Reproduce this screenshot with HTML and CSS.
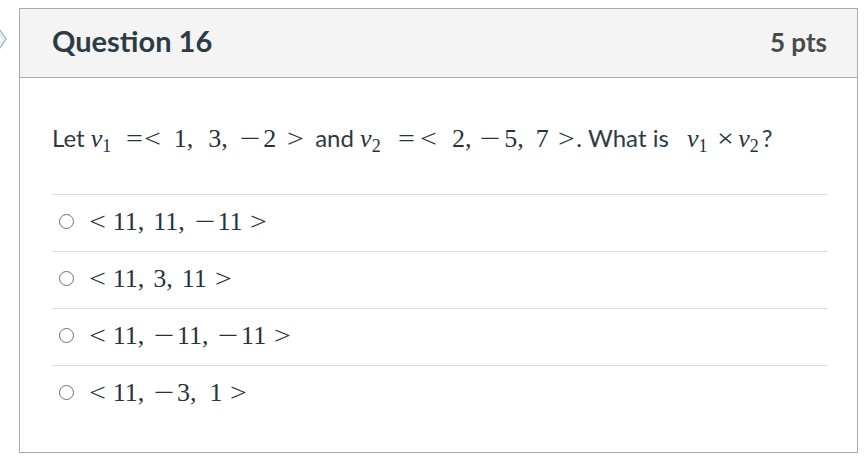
FILE: index.html
```html
<!DOCTYPE html>
<html>
<head>
<meta charset="utf-8">
<link rel="stylesheet" href="styles.css">
</head>
<body>
<div class="page">
  <svg class="flag" width="10" height="24" viewBox="0 0 10 24">
    <polyline points="-1,1 6,11 -1,21" fill="none" stroke="#a9bccb" stroke-width="1.6"/>
    <polyline points="-1,5 3,11 -1,17" fill="none" stroke="#c9d6e0" stroke-width="1"/>
  </svg>
  <div class="question">
    <div class="header">
      <h2 class="title">Question 16</h2>
      <div class="pts">5 pts</div>
    </div>
    <div class="content">
      <p class="prompt">Let <span class="m"><i>v</i><sub>1</sub><span class="eq"><span class="sym">=</span><span class="sym lt">&lt;</span></span>1,<span class="g"></span>3,<span class="g"></span><span class="neg">−</span>2<span class="sym gt">&gt;</span></span> and <span class="m"><i>v</i><sub>2</sub><span class="eq wide"><span class="sym">=</span><span class="sym lt">&lt;</span></span>2,<span class="g2"></span><span class="neg">−</span>5,<span class="g2"></span>7<span class="sym gt end">&gt;</span></span>.<span class="sp"></span>What is <span class="m far"><i>v</i><sub>1</sub><span class="sym x">×</span><i>v</i><sub>2</sub></span>?</p>
      <div class="answers">
        <label class="answer"><span class="radio"></span><span class="m"><span class="sym alt">&lt;</span>11,<span class="ga"></span>11,<span class="ga"></span><span class="neg">−</span>11<span class="sym agt">&gt;</span></span></label>
        <label class="answer"><span class="radio"></span><span class="m"><span class="sym alt">&lt;</span>11,<span class="ga"></span>3,<span class="ga"></span>11<span class="sym agt">&gt;</span></span></label>
        <label class="answer"><span class="radio"></span><span class="m"><span class="sym alt">&lt;</span>11,<span class="ga"></span><span class="neg">−</span>11,<span class="ga"></span><span class="neg">−</span>11<span class="sym agt">&gt;</span></span></label>
        <label class="answer"><span class="radio"></span><span class="m"><span class="sym alt">&lt;</span>11,<span class="ga"></span><span class="neg">−</span>3,<span class="ga wide"></span>1<span class="sym agt">&gt;</span></span></label>
      </div>
    </div>
  </div>
</div>
</body>
</html>
```
FILE: styles.css
```css
html, body {
  margin: 0;
  padding: 0;
  background: #fff;
}
body {
  font-family: Lato, "Liberation Sans", sans-serif;
  color: #2d3b45;
}
.page {
  position: relative;
  padding: 8px 0 0 19px;
}
.flag {
  position: absolute;
  left: 0;
  top: 28px;
}
.question {
  box-sizing: border-box;
  width: 839px;
  height: 445px;
  border: 1px solid #aaaaaa;
}
.header {
  box-sizing: border-box;
  height: 69px;
  background: #f4f4f4;
  border-bottom: 1px solid #aaaaaa;
  display: flex;
  align-items: baseline;
  justify-content: space-between;
  padding: 14px 30px 0 32px;
}
.title {
  margin: 0;
  font-size: 29px;
  line-height: normal;
  font-weight: 700;
  color: #2d3b45;
}
.pts {
  font-size: 26px;
  font-weight: 700;
  color: #4a4a4a;
}
.content {
  padding: 0 30px 0 32px;
}
.prompt {
  margin: 0;
  padding: 45px 0 40px;
  font-size: 24px;
  line-height: 30px;
  white-space: nowrap;
}
.m {
  font-family: "Liberation Serif", "DejaVu Serif", serif;
  font-size: 26px;
  color: #26333d;
}
.m i {
  font-style: italic;
}
.m sub {
  font-size: 18px;
  vertical-align: -5px;
  line-height: 0;
}
.m.far {
  margin: 0 3px 0 12px;
}
.sym {
  display: inline-block;
  transform: scaleX(1.15);
}
.neg {
  display: inline-block;
  transform: scaleX(1.4);
  margin-right: 6px;
}
.eq {
  margin: 0 14px 0 16px;
}
.eq .lt {
  margin-left: 3px;
}
.eq.wide {
  margin: 0 16px 0 18px;
}
.eq.wide .lt {
  margin-left: 8px;
}
.gt {
  margin: 0 6px 0 12px;
}
.gt.end {
  margin: 0 3px 0 10px;
}
.sp {
  display: inline-block;
  width: 6px;
}
.x {
  margin: 0 6px 0 10px;
}
.g {
  display: inline-block;
  width: 15px;
}
.g2 {
  display: inline-block;
  width: 12px;
}
.answers {
  display: flex;
  flex-direction: column;
}
.answer {
  box-sizing: border-box;
  height: 57px;
  border-top: 1px solid #dddddd;
  display: flex;
  align-items: center;
  gap: 16px;
  padding: 0 0 3px 7px;
}
.answer .m {
  line-height: 30px;
}
.answer .neg {
  margin: 0 5px 0 4px;
}
.alt {
  margin-right: 8px;
}
.agt {
  margin-left: 9px;
}
.ga {
  display: inline-block;
  width: 9px;
}
.ga.wide {
  width: 13px;
}
.radio {
  box-sizing: border-box;
  width: 15px;
  height: 15px;
  border: 1.5px solid #6f6f6f;
  border-radius: 50%;
  flex: none;
}
```
